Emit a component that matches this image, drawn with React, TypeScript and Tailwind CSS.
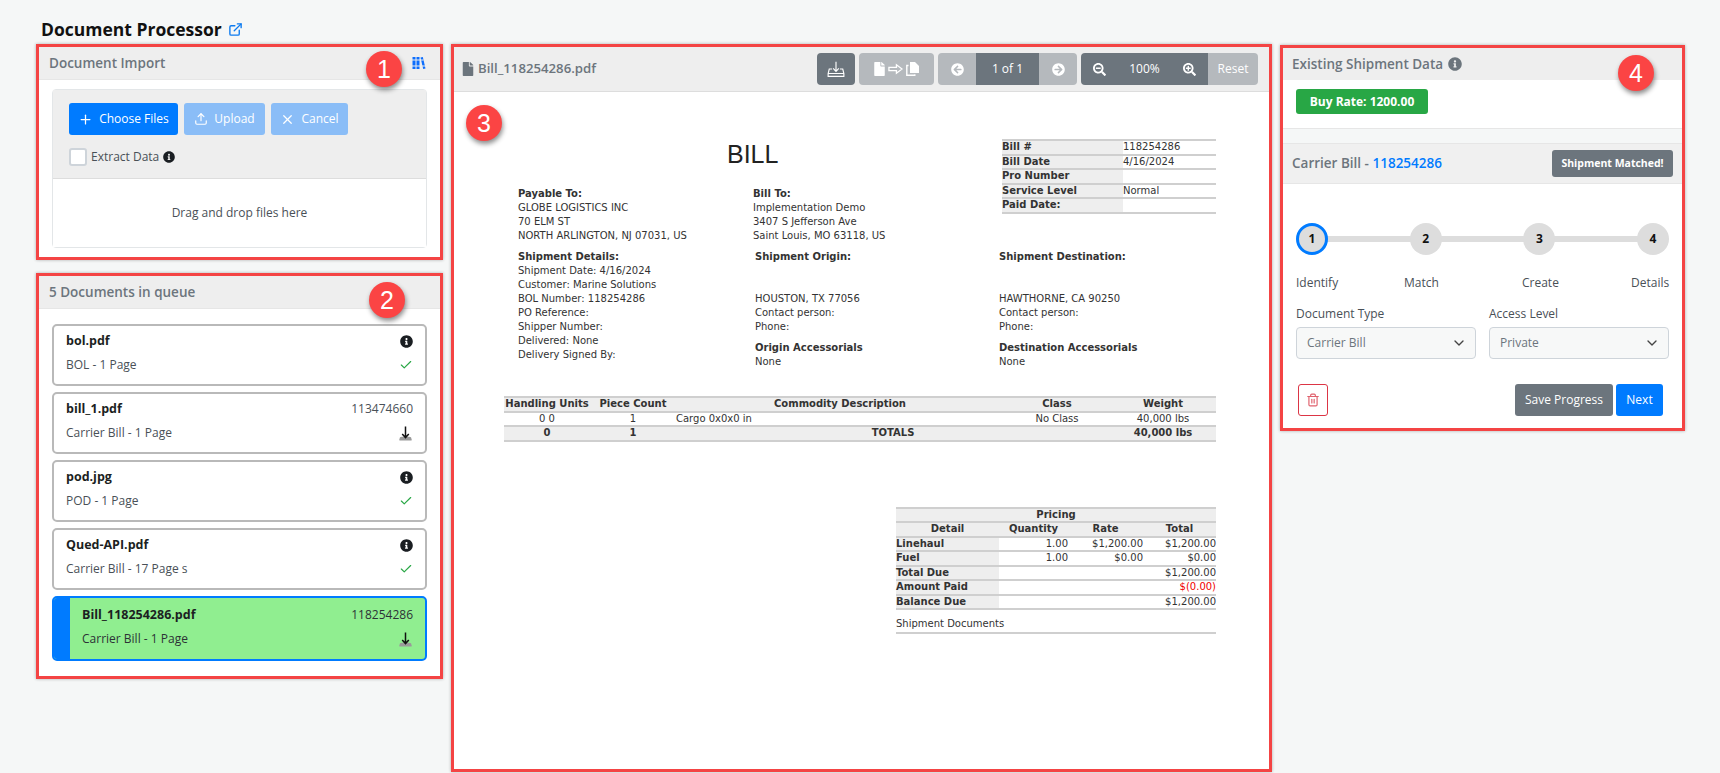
import React from 'react';
import { FaInfoCircle, FaFile, FaArrowCircleLeft, FaArrowCircleRight, FaSearchMinus, FaSearchPlus } from 'react-icons/fa';
import { Plus, Upload, X, Check, ChevronDown, Trash2, ExternalLink } from 'lucide-react';

const queue = [
  { name: 'bol.pdf', sub: 'BOL - 1 Page', ref: '', done: true },
  { name: 'bill_1.pdf', sub: 'Carrier Bill - 1 Page', ref: '113474660', done: false },
  { name: 'pod.jpg', sub: 'POD - 1 Page', ref: '', done: true },
  { name: 'Qued-API.pdf', sub: 'Carrier Bill - 17 Page s', ref: '', done: true },
];

const Marker = ({ n, className }: { n: number; className: string }) => (
  <div className={`absolute z-10 flex h-[36px] w-[36px] items-center justify-center rounded-full bg-[#fb4444] text-[25px] leading-none text-white shadow-[1px_3px_5px_rgba(0,0,0,0.45)] font-['Liberation_Sans',sans-serif] ${className}`}>
    {n}
  </div>
);

const TrayDown = () => (
  <svg viewBox="0 0 16 16" className="h-[15px] w-[15px]">
    <path d="M1.5 15.5v-1.5q0-2.5 2.5-2.5h8q2.500 0 2.500 2.500v1.500z" fill="#9a9a9a" />
    <path d="M8 0.5v11.500M4.500 8.500 8 12.300l3.500-3.800" fill="none" stroke="#111" strokeWidth="1.600" />
  </svg>
);

const BooksIcon = () => (
  <svg viewBox="0 0 14 14" className="h-[14px] w-[14px]" fill="#0d6efd">
    <rect x="0.5" y="1" width="3" height="12" />
    <rect x="4.5" y="1" width="3" height="12" />
    <path d="M8.5 1.6 10.8 1l2.700 11.400-2.300.6z" />
    <path d="M0 3.500h11.500v1H0zM0 9.500h13v1H0z" fill="#eeeeee" />
  </svg>
);

const PanelHeader = ({ children }: { children: React.ReactNode }) => (
  <div className="flex h-[33px] items-center justify-between border-b border-[#e6e6e6] bg-[#eeeeee] pl-[10px] pr-[14px] text-[13.5px] font-semibold text-[#6c757d]">
    {children}
  </div>
);

const docCell = 'border-b-2 border-[#cfcfcf] h-[14.500px] leading-[12px] p-0';

const BillDocument = () => (
  <div className="flex-1 bg-white pl-[64px] text-[#333] font-['DejaVu_Sans',sans-serif] text-[10px] leading-[14px]">
    {/* top block */}
    <div className="flex">
      <div className="w-[484px]">
        <div className="h-[72px] pl-[209px] pt-[47px] text-[25px] font-light leading-[30px] font-['Liberation_Sans',sans-serif] text-[#222]">BILL</div>
        <div className="mt-[23px] flex">
          <div className="w-[235px]">
            <div className="font-bold">Payable To:</div>
            <div>GLOBE LOGISTICS INC</div>
            <div>70 ELM ST</div>
            <div>NORTH ARLINGTON, NJ 07031, US</div>
          </div>
          <div>
            <div className="font-bold">Bill To:</div>
            <div>Implementation Demo</div>
            <div>3407 S Jefferson Ave</div>
            <div>Saint Louis, MO 63118, US</div>
          </div>
        </div>
      </div>
      <table className="mt-[47px] h-[73px] w-[214px] table-fixed self-start border-t-2 border-[#cfcfcf]">
        <tbody>
          {[['Bill #', '118254286'], ['Bill Date', '4/16/2024'], ['Pro Number', ''], ['Service Level', 'Normal'], ['Paid Date:', '']].map(([k, v]) => (
            <tr key={k}>
              <td className={`${docCell} w-[121px] bg-[#eeeeee] font-bold`}>{k}</td>
              <td className={docCell}>{v}</td>
            </tr>
          ))}
        </tbody>
      </table>
    </div>
    {/* shipment block */}
    <div className="mt-[7px] flex">
      <div className="w-[237px]">
        <div className="font-bold">Shipment Details:</div>
        <div>Shipment Date: 4/16/2024</div>
        <div>Customer: Marine Solutions</div>
        <div>BOL Number: 118254286</div>
        <div>PO Reference:</div>
        <div>Shipper Number:</div>
        <div>Delivered: None</div>
        <div>Delivery Signed By:</div>
      </div>
      <div className="w-[244px]">
        <div className="mb-[28px] font-bold">Shipment Origin:</div>
        <div>HOUSTON, TX 77056</div>
        <div>Contact person:</div>
        <div className="mb-[7px]">Phone:</div>
        <div className="font-bold">Origin Accessorials</div>
        <div>None</div>
      </div>
      <div>
        <div className="mb-[28px] font-bold">Shipment Destination:</div>
        <div>HAWTHORNE, CA 90250</div>
        <div>Contact person:</div>
        <div className="mb-[7px]">Phone:</div>
        <div className="font-bold">Destination Accessorials</div>
        <div>None</div>
      </div>
    </div>
    {/* commodities */}
    <table className="ml-[-14px] mt-[27px] w-[712px] table-fixed border-t-2 border-[#cfcfcf] text-center">
      <colgroup>
        <col className="w-[86px]" />
        <col className="w-[86px]" />
        <col className="w-[328px]" />
        <col className="w-[106px]" />
        <col className="w-[106px]" />
      </colgroup>
      <tbody>
        <tr className="bg-[#eeeeee] font-bold">
          <td className={docCell}>Handling Units</td>
          <td className={docCell}>Piece Count</td>
          <td className={docCell}>Commodity Description</td>
          <td className={docCell}>Class</td>
          <td className={docCell}>Weight</td>
        </tr>
        <tr>
          <td className={docCell}>0 0</td>
          <td className={docCell}>1</td>
          <td className={`${docCell} text-left`}>Cargo 0x0x0 in</td>
          <td className={docCell}>No Class</td>
          <td className={docCell}>40,000 lbs</td>
        </tr>
        <tr className="bg-[#eeeeee] font-bold">
          <td className={docCell}>0</td>
          <td className={docCell}>1</td>
          <td className={docCell} colSpan={2}>TOTALS</td>
          <td className={docCell}>40,000 lbs</td>
        </tr>
      </tbody>
    </table>
    {/* pricing */}
    <div className="ml-[378px] mt-[65px] w-[320px]">
      <table className="w-full table-fixed border-t-2 border-[#cfcfcf]">
        <colgroup>
          <col className="w-[103px]" />
          <col className="w-[69px]" />
          <col className="w-[75px]" />
          <col className="w-[73px]" />
        </colgroup>
        <tbody>
          <tr className="bg-[#eeeeee] text-center font-bold">
            <td className={docCell} colSpan={4}>Pricing</td>
          </tr>
          <tr className="bg-[#eeeeee] text-center font-bold">
            <td className={docCell}>Detail</td>
            <td className={docCell}>Quantity</td>
            <td className={docCell}>Rate</td>
            <td className={docCell}>Total</td>
          </tr>
          <tr className="text-right">
            <td className={`${docCell} bg-[#eeeeee] text-left font-bold`}>Linehaul</td>
            <td className={docCell}>1.00</td>
            <td className={docCell}>$1,200.00</td>
            <td className={docCell}>$1,200.00</td>
          </tr>
          <tr className="text-right">
            <td className={`${docCell} bg-[#eeeeee] text-left font-bold`}>Fuel</td>
            <td className={docCell}>1.00</td>
            <td className={docCell}>$0.00</td>
            <td className={docCell}>$0.00</td>
          </tr>
          {[['Total Due', '$1,200.00', ''], ['Amount Paid', '$(0.00)', 'text-[#f00000]'], ['Balance Due', '$1,200.00', '']].map(([k, v, c]) => (
            <tr key={k} className="text-right">
              <td className={`${docCell} bg-[#eeeeee] text-left font-bold`}>{k}</td>
              <td className={`${docCell} ${c}`} colSpan={3}>{v}</td>
            </tr>
          ))}
        </tbody>
      </table>
      <div className="mt-[7px] border-b-2 border-[#cfcfcf] pb-[1px]">Shipment Documents</div>
    </div>
  </div>
);

export default function App() {
  return (
    <div className="relative h-[773px] w-[1720px] overflow-hidden bg-[#f5f7f7] pl-[36px] font-['Open_Sans',sans-serif] text-[#495057]">
      <h1 className="flex h-[44px] items-center gap-[6px] pl-[5px] pt-[14px] text-[17.5px] font-bold text-[#111]">
        Document Processor
        <ExternalLink className="h-[15px] w-[15px] text-[#0d7bf0]" strokeWidth={2.2} />
      </h1>
      <div className="flex items-start gap-[8px]">
        {/* left column */}
        <div className="flex w-[407px] flex-col gap-[13px]">
          <section className="relative h-[216px] border-[3px] border-[#f44444] bg-white shadow-[0_0_3px_rgba(0,0,0,0.3)]">
            <Marker n={1} className="left-[327px] top-[4px]" />
            <PanelHeader>
              <span>Document Import</span>
              <BooksIcon />
            </PanelHeader>
            <div className="mx-[13px] mt-[9px] h-[159px] rounded-[4px] border border-[#e3e6e8]">
              <div className="h-[89px] border-b border-[#dddddd] bg-[#eeeeee] pl-[16px] pt-[13px]">
                <div className="flex gap-[6px] text-[12px]">
                  <div className="flex h-[32px] w-[109px] items-center justify-center gap-[6px] rounded-[3px] bg-[#007bff] text-white">
                    <Plus className="h-[15px] w-[15px]" /> Choose Files
                  </div>
                  <div className="flex h-[32px] w-[81px] items-center justify-center gap-[6px] rounded-[3px] bg-[#8abdf7] text-white">
                    <Upload className="h-[14px] w-[14px]" /> Upload
                  </div>
                  <div className="flex h-[32px] w-[77px] items-center justify-center gap-[6px] rounded-[3px] bg-[#8abdf7] text-white">
                    <X className="h-[15px] w-[15px]" /> Cancel
                  </div>
                </div>
                <div className="mt-[13px] flex items-center gap-[4px] text-[12px]">
                  <div className="h-[18px] w-[18px] rounded-[3px] border-2 border-[#ced4da] bg-white" />
                  <span>Extract Data</span>
                  <FaInfoCircle className="h-[12px] w-[12px] text-[#1a1e22]" />
                </div>
              </div>
              <div className="flex h-[68px] items-center justify-center bg-white text-[12px]">Drag and drop files here</div>
            </div>
          </section>

          <section className="relative h-[406px] border-[3px] border-[#f44444] bg-white shadow-[0_0_3px_rgba(0,0,0,0.3)]">
            <Marker n={2} className="left-[330px] top-[6px]" />
            <PanelHeader>
              <span>5 Documents in queue</span>
            </PanelHeader>
            <div className="mx-[13px] mt-[15px] flex flex-col gap-[6px] text-[12px]">
              {queue.map((d) => (
                <div key={d.name} className="h-[62px] rounded-[5px] border-2 border-[#b9b9b9] bg-white px-[12px] pt-[3px]">
                  <div className="flex h-[24px] items-center justify-between">
                    <b className="text-[12.5px] text-[#1c1f22]">{d.name}</b>
                    {d.ref ? <span>{d.ref}</span> : <FaInfoCircle className="h-[13px] w-[13px] text-[#1a1e22]" />}
                  </div>
                  <div className="flex h-[24px] items-center justify-between">
                    <span>{d.sub}</span>
                    {d.done ? <Check className="h-[14px] w-[14px] text-[#28a745]" /> : <TrayDown />}
                  </div>
                </div>
              ))}
              <div className="flex h-[65px] overflow-hidden rounded-[5px] border-2 border-[#007bff] bg-[#90ee90]">
                <div className="w-[16px] bg-[#007bff]" />
                <div className="flex-1 pl-[12px] pr-[12px] pt-[5px] text-[#2c3236]">
                  <div className="flex h-[24px] items-center justify-between">
                    <b className="text-[12.5px] text-[#1c1f22]">Bill_118254286.pdf</b>
                    <span>118254286</span>
                  </div>
                  <div className="flex h-[24px] items-center justify-between">
                    <span>Carrier Bill - 1 Page</span>
                    <TrayDown />
                  </div>
                </div>
              </div>
            </div>
          </section>
        </div>

        {/* viewer */}
        <section className="relative flex h-[728px] w-[821px] flex-col border-[3px] border-[#f44444] bg-white shadow-[0_0_3px_rgba(0,0,0,0.3)]">
          <Marker n={3} className="left-[12px] top-[58px]" />
          <div className="flex h-[45px] shrink-0 items-center justify-between border-b border-[#dddddd] bg-[#eeeeee] pl-[8px] pr-[11px] text-[#6c757d]">
            <div className="flex items-center gap-[4px] text-[13.2px] font-semibold">
              <FaFile className="h-[14px] w-[12px]" /> Bill_118254286.pdf
            </div>
            <div className="flex gap-[4px] text-[12px] text-white">
              <div className="flex h-[32px] w-[38px] items-center justify-center rounded-[4px] bg-[#6c757d]">
                <svg viewBox="0 0 16 16" className="h-[18px] w-[18px]" fill="none" stroke="#fff" strokeWidth="1">
                  <path d="M8 1.500v8.500M5.500 7.500 8 10.200l2.500-2.700M4.500 8H2l-1 4v2.500h14V12l-1-4h-2.500M1 12h14" />
                </svg>
              </div>
              <div className="flex h-[32px] w-[75px] items-center justify-center gap-[3px] rounded-[4px] bg-[#b5b9bd]">
                <FaFile className="h-[14px] w-[11px]" />
                <svg viewBox="0 0 16 12" className="h-[12px] w-[15px]" fill="none" stroke="#fff" strokeWidth="1.400">
                  <path d="M1 4.200h8V1.500L15 6l-6 4.500V7.800H1z" />
                </svg>
                <svg viewBox="0 0 13 14" className="h-[14px] w-[13px]">
                  <path d="M4 0h5l4 4v7H4z" fill="#fff" />
                  <path d="M2.500 3.500H.8v9.700h8v-1" fill="none" stroke="#fff" strokeWidth="1.400" />
                </svg>
              </div>
              <div className="flex h-[32px] w-[139px] overflow-hidden rounded-[4px]">
                <div className="flex w-[38px] items-center justify-center bg-[#b5b9bd]"><FaArrowCircleLeft className="h-[13px] w-[13px]" /></div>
                <div className="flex flex-1 items-center justify-center bg-[#6c757d]">1 of 1</div>
                <div className="flex w-[38px] items-center justify-center bg-[#b5b9bd]"><FaArrowCircleRight className="h-[13px] w-[13px]" /></div>
              </div>
              <div className="flex h-[32px] w-[177px] overflow-hidden rounded-[4px]">
                <div className="flex flex-1 items-center justify-between bg-[#6c757d] px-[12px]">
                  <FaSearchMinus className="h-[13px] w-[13px]" />
                  <span>100%</span>
                  <FaSearchPlus className="h-[13px] w-[13px]" />
                </div>
                <div className="flex w-[50px] items-center justify-center bg-[#b5b9bd]">Reset</div>
              </div>
            </div>
          </div>
          <BillDocument />
        </section>

        {/* right column */}
        <section className="relative mt-[1px] h-[386px] w-[405px] border-[3px] border-[#f44444] bg-white shadow-[0_0_3px_rgba(0,0,0,0.3)]">
          <Marker n={4} className="left-[335px] top-[7px]" />
          <div className="flex h-[32px] items-center gap-[5px] bg-[#eeeeee] pl-[9px] text-[13.5px] font-semibold text-[#6c757d]">
            Existing Shipment Data
            <FaInfoCircle className="h-[14px] w-[14px]" />
          </div>
          <div className="h-[49px] border-b border-[#e6e6e6] pl-[13px] pt-[9px]">
            <div className="flex h-[25px] w-[132px] items-center justify-center rounded-[3px] bg-[#28a745] text-[12px] font-bold text-white">Buy Rate: 1200.00</div>
          </div>
          <div className="h-[14px] bg-[#f5f7f7]" />
          <div className="flex h-[41px] items-center justify-between border-y border-[#e6e6e6] bg-[#f0f0f0] pl-[9px] pr-[9px]">
            <div className="text-[13.5px] font-semibold text-[#6c757d]">
              Carrier Bill - <span className="text-[#007bff]">118254286</span>
            </div>
            <div className="flex h-[27px] w-[121px] items-center justify-center rounded-[3px] bg-[#6c757d] text-[10.5px] font-bold text-white">Shipment Matched!</div>
          </div>
          <div className="px-[13px]">
            {/* stepper */}
            <div className="relative mt-[39px] flex justify-between">
              <div className="absolute left-[8px] right-[8px] top-[13px] h-[6px] bg-[#dddddd]" />
              {[1, 2, 3, 4].map((n) => (
                <div key={n} className={`relative flex h-[32px] w-[32px] items-center justify-center rounded-full bg-[#dddddd] text-[12px] font-bold text-[#111] ${n === 1 ? 'border-[3px] border-[#007bff]' : ''}`}>
                  {n}
                </div>
              ))}
            </div>
            <div className="mt-[19px] grid grid-cols-[108px_118px_109px_37px] text-[12px] leading-[18px]">
              <span>Identify</span>
              <span>Match</span>
              <span>Create</span>
              <span>Details</span>
            </div>
            <div className="mt-[13px] grid grid-cols-2 gap-x-[13px] text-[12px]">
              {[['Document Type', 'Carrier Bill'], ['Access Level', 'Private']].map(([label, val]) => (
                <div key={label}>
                  <div className="mb-[4px] leading-[18px]">{label}</div>
                  <div className="flex h-[32px] items-center justify-between rounded-[4px] border border-[#ced4da] bg-[#f7f8f8] pl-[10px] pr-[8px] text-[#6c757d]">
                    {val}
                    <ChevronDown className="h-[16px] w-[16px] text-[#444]" />
                  </div>
                </div>
              ))}
            </div>
            <div className="mt-[25px] flex items-start pl-[2px] pr-[6px]">
              <div className="flex h-[32px] w-[30px] items-center justify-center rounded-[3px] border border-[#dc3545]">
                <Trash2 className="h-[14px] w-[14px] text-[#e0606c]" />
              </div>
              <div className="ml-auto flex gap-[3px] text-[12px] text-white">
                <div className="flex h-[32px] w-[98px] items-center justify-center rounded-[3px] bg-[#6c757d]">Save Progress</div>
                <div className="flex h-[32px] w-[47px] items-center justify-center rounded-[3px] bg-[#007bff]">Next</div>
              </div>
            </div>
          </div>
        </section>
      </div>
    </div>
  );
}
